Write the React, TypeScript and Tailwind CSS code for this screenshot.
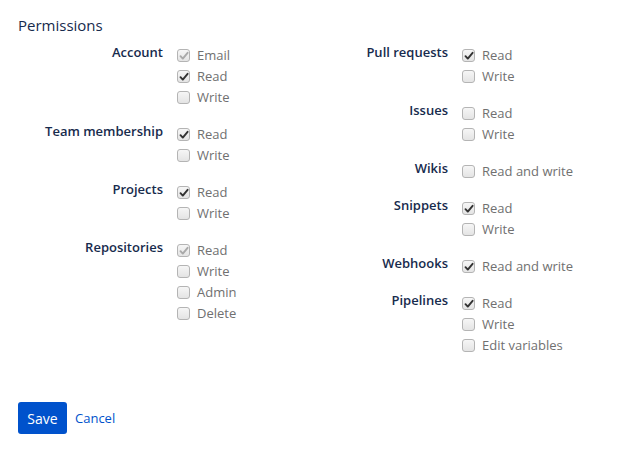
import React from "react";

type Opt = { label: string; checked?: boolean; disabled?: boolean };
type Group = { name: string; opts: Opt[] };

const left: Group[] = [
  { name: "Account", opts: [{ label: "Email", checked: true, disabled: true }, { label: "Read", checked: true }, { label: "Write" }] },
  { name: "Team membership", opts: [{ label: "Read", checked: true }, { label: "Write" }] },
  { name: "Projects", opts: [{ label: "Read", checked: true }, { label: "Write" }] },
  { name: "Repositories", opts: [{ label: "Read", checked: true, disabled: true }, { label: "Write" }, { label: "Admin" }, { label: "Delete" }] },
];

const right: Group[] = [
  { name: "Pull requests", opts: [{ label: "Read", checked: true }, { label: "Write" }] },
  { name: "Issues", opts: [{ label: "Read" }, { label: "Write" }] },
  { name: "Wikis", opts: [{ label: "Read and write" }] },
  { name: "Snippets", opts: [{ label: "Read", checked: true }, { label: "Write" }] },
  { name: "Webhooks", opts: [{ label: "Read and write", checked: true }] },
  { name: "Pipelines", opts: [{ label: "Read", checked: true }, { label: "Write" }, { label: "Edit variables" }] },
];

function Box({ checked, disabled }: { checked?: boolean; disabled?: boolean }) {
  return (
    <span className="relative flex h-[13px] w-[13px] shrink-0 items-center justify-center rounded-[3px] border border-[#b4b4b4] bg-gradient-to-b from-[#f6f6f6] to-[#e4e4e4]">
      {checked && (
        <svg width="10" height="10" viewBox="0 0 10 10">
          <path
            d="M1.5 5.2 L3.8 7.6 L8.6 1.8"
            fill="none"
            stroke={disabled ? "#a9a9a9" : "#333333"}
            strokeWidth="1.9"
            strokeLinecap="round"
            strokeLinejoin="round"
          />
        </svg>
      )}
    </span>
  );
}

function Column({ groups }: { groups: Group[] }) {
  return (
    <div className="flex w-[285px] flex-col gap-[16px]">
      {groups.map((g) => (
        <div key={g.name} className="flex">
          <div className="w-[145px] text-right text-[13px] leading-[14px] font-semibold text-[#172b4d]">{g.name}</div>
          <div className="ml-[14px] flex flex-col">
            {g.opts.map((o, i) => (
              <div key={i} className="flex h-[21px] items-center">
                <Box checked={o.checked} disabled={o.disabled} />
                <span className="ml-[7px] pt-[1px] text-[13px] text-[#707070]">{o.label}</span>
              </div>
            ))}
          </div>
        </div>
      ))}
    </div>
  );
}

export default function App() {
  return (
    <div
      className="min-h-[457px] w-[644px] bg-white px-[18px] pt-[14px]"
      style={{ fontFamily: '"Open Sans", "Noto Sans", sans-serif' }}
    >
      <h2 className="text-[15px] leading-[22px] font-medium text-[#172b4d]">Permissions</h2>
      <div className="mt-[9px] flex">
        <Column groups={left} />
        <Column groups={right} />
      </div>
      <div className="mt-[46px] flex items-center gap-[8px]">
        <button className="h-[32px] w-[49px] rounded-[3px] bg-[#0052cc] text-[14px] text-white">Save</button>
        <a className="pt-[1px] text-[13px] text-[#0052cc]">Cancel</a>
      </div>
    </div>
  );
}
